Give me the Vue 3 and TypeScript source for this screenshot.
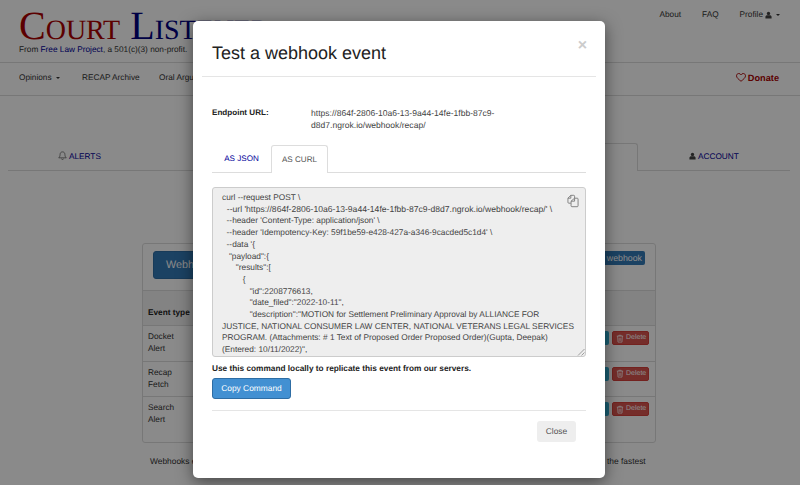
<script setup lang="ts">
const rows: string[][] = [
  ['Docket', 'Alert'],
  ['Recap', 'Fetch'],
  ['Search', 'Alert'],
]
const curlHead = `curl --request POST \\
`
const curlUrl = `  --url 'https://864f-2806-10a6-13-9a44-14fe-1fbb-87c9-d8d7.ngrok.io/webhook/recap/' \\
`
const curlRest = `  --header 'Content-Type: application/json' \\
  --header 'Idempotency-Key: 59f1be59-e428-427a-a346-9cacded5c1d4' \\
  --data '{
   "payload":{
      "results":[
         {
            "id":2208776613,
            "date_filed":"2022-10-11",
            "description":"MOTION for Settlement Preliminary Approval by ALLIANCE FOR
JUSTICE, NATIONAL CONSUMER LAW CENTER, NATIONAL VETERANS LEGAL SERVICES
PROGRAM. (Attachments: # 1 Text of Proposed Order Proposed Order)(Gupta, Deepak)
(Entered: 10/11/2022)",`
</script>

<template>
  <div class="root">
    <div class="page">
      <header class="top">
        <div class="brand">
          <div class="logo"><span class="red">Court</span> <span class="navy">Listener</span></div>
          <div class="tag">From <a class="link">Free Law Project</a>, a 501(c)(3) non-profit.</div>
        </div>
        <nav class="topnav">
          <span>About</span>
          <span>FAQ</span>
          <span class="profile">Profile
            <svg class="usr" viewBox="0 0 10 10"><circle cx="5" cy="2.8" r="2.4" /><path d="M.6 10V7.6C.6 6 2 5.2 3 5.2h4c1 0 2.4.8 2.4 2.4V10z" /></svg>
            <i class="caret"></i>
          </span>
        </nav>
      </header>
      <nav class="mainnav">
        <div class="navleft">
          <span class="opinions">Opinions <i class="caret"></i></span>
          <span class="recap">RECAP Archive</span>
          <span>Oral Arguments</span>
        </div>
        <span class="donate">
          <svg class="heart" viewBox="0 0 20 18"><path d="M10 16.5C5 12.500 1 9.500 1 5.600 1 3 3 1 5.500 1 7.500 1 9 2 10 3.800 11 2 12.500 1 14.500 1 17 1 19 3 19 5.600 19 9.500 15 12.500 10 16.500z" /></svg>
          Donate
        </span>
      </nav>
      <div class="pagetabs">
        <div class="ptab first"><svg class="bell" viewBox="0 0 10 10"><path d="M5 1C3.200 1 2.300 2.300 2.300 4c0 2-.9 3-1.500 3.600h8.400C8.600 7 7.700 6 7.700 4 7.700 2.300 6.800 1 5 1zM4 8.500a1 1 0 0 0 2 0" /></svg> <a class="link">ALERTS</a></div>
        <div class="ptab spacer"></div>
        <div class="ptab active"></div>
        <div class="ptab account"><svg class="usr" viewBox="0 0 10 10"><circle cx="5" cy="2.800" r="2.400" /><path d="M.6 10V7.600C.6 6 2 5.200 3 5.200h4c1 0 2.400.8 2.400 2.400V10z" /></svg> <a class="link">ACCOUNT</a></div>
      </div>
      <section class="panel">
        <div class="panelhead">
          <span class="bigbtn">Webhook Logs</span>
          <span class="addbtn">Add webhook</span>
        </div>
        <div class="thead">Event type</div>
        <div v-for="(r, i) in rows" :key="i" class="trow" :class="{ last: i === 2 }">
          <div class="cell">{{ r[0] }}<br />{{ r[1] }}</div>
          <div class="actions">
            <span class="btn-info">Test</span>
            <span class="btn-del">
              <svg class="trash" viewBox="0 0 10 10"><path d="M1 2h8M3.500 2V1h3v1M2 2l.5 7.500h5L8 2M4 4v4M6 4v4" /></svg>
              Delete
            </span>
          </div>
        </div>
      </section>
      <p class="foot">Webhooks enable you to receive events from CourtListener as soon as they happen, and are the recommended way to get the fastest</p>
    </div>

    <div class="overlay"></div>

    <div class="modal">
      <div class="mhead">
        <h4>Test a webhook event</h4>
        <span class="close">×</span>
      </div>
      <div class="mbody">
        <div class="endpoint">
          <strong>Endpoint URL:</strong>
          <span class="url">https://864f-2806-10a6-13-9a44-14fe-1fbb-87c9-d8d7.ngrok.io/webhook/recap/</span>
        </div>
        <div class="tabs">
          <span class="tab"><a class="link">AS JSON</a></span>
          <span class="tab on">AS CURL</span>
        </div>
        <div class="code">
          <div class="codetext">{{ curlHead }}<span class="urlline">{{ curlUrl }}</span>{{ curlRest }}</div>
          <svg class="copy" viewBox="0 0 16 16"><path d="M5.500 10.500H3.200a1 1 0 0 1-1-1V4.800L5.500 1.500h3.300a1 1 0 0 1 1 1v2" /><path d="M5.500 1.500v3.300H2.200" /><path d="M9.800 4.800h3a1 1 0 0 1 1 1v7.700a1 1 0 0 1-1 1H6.800a1 1 0 0 1-1-1V8.200z" /><path d="M9.800 4.800v3.400H5.800" /></svg>
          <svg class="grip" viewBox="0 0 8 8"><path d="M1 7.500 7.500 1M4.500 7.500l3-3" /></svg>
        </div>
        <p class="hint">Use this command locally to replicate this event from our servers.</p>
        <span class="copybtn">Copy Command</span>
      </div>
      <div class="mfoot">
        <span class="closebtn">Close</span>
      </div>
    </div>
  </div>
</template>

<style>
html, body { margin: 0; overflow: hidden; background: #fff; }
</style>

<style scoped>
.root {
  position: relative;
  width: 800px;
  height: 485px;
  overflow: hidden;
  font-family: "Liberation Sans", Arial, sans-serif;
  font-size: 8.25px;
  color: #333;
  text-rendering: geometricPrecision;
}
.page { height: 485px; overflow: hidden; background: #fff; }
.link { color: #000099; }
.top {
  display: flex;
  justify-content: space-between;
  height: 63px;
  box-sizing: border-box;
  padding: 0 20px 0 19px;
  border-bottom: 1px solid #ddd;
}
.logo {
  font-family: "Liberation Serif", serif;
  font-variant: small-caps;
  font-size: 40px;
  line-height: 35px;
  margin-top: 8px;
  white-space: nowrap;
}
.red { color: #a00; }
.navy { color: #000080; }
.tag { line-height: 14px; }
.topnav { display: flex; gap: 21px; padding-top: 9px; line-height: 12px; }
.profile { display: inline-flex; align-items: center; gap: 2px; height: 12px; }
.usr { width: 7px; height: 8px; fill: #444; }
.caret {
  display: inline-block;
  width: 0;
  height: 0;
  margin-left: 2px;
  vertical-align: middle;
  border-top: 2.500px solid #333;
  border-left: 2.500px solid transparent;
  border-right: 2.500px solid transparent;
}
.mainnav {
  display: flex;
  justify-content: space-between;
  align-items: center;
  height: 29px;
  padding: 0 21px 3px 19px;
  border-bottom: 1px solid #ddd;
}
.navleft { display: flex; white-space: nowrap; }
.opinions { width: 63px; }
.recap { width: 77px; }
.donate { display: flex; align-items: center; gap: 2px; color: #a00; font-weight: 700; font-size: 9.2px; }
.heart { width: 10px; height: 9px; fill: none; stroke: #a00; stroke-width: 1.800; }
.pagetabs {
  display: flex;
  height: 27px;
  margin: 47px 10px 0 8px;
  border-bottom: 1px solid #ddd;
}
.ptab {
  box-sizing: border-box;
  height: 27px;
  line-height: 28px;
  text-align: center;
  white-space: nowrap;
}
.first { width: 143px; }
.spacer { width: 240px; }
.active { width: 247px; border: 1px solid #ddd; border-bottom: 0; background: #fff; height: 28px; border-radius: 3px 3px 0 0; }
.account { flex: 1; }
.bell { width: 9px; height: 9px; fill: none; stroke: #555; stroke-width: .8; vertical-align: -1px; }
.ptab .usr { vertical-align: -1px; }
.panel {
  width: 514px;
  height: 200px;
  box-sizing: border-box;
  margin: 72px 0 0 142px;
  border: 1px solid #ddd;
  border-radius: 3px;
}
.panelhead {
  display: flex;
  justify-content: space-between;
  align-items: flex-start;
  height: 47px;
  box-sizing: border-box;
  padding: 7px 10px 0;
  border-bottom: 1px solid #ddd;
}
.bigbtn {
  background: #337ab7;
  border: 1px solid #2e6da4;
  border-radius: 3px;
  color: #fff;
  font-size: 10.8px;
  line-height: 26px;
  padding: 0 12px;
}
.addbtn {
  background: #337ab7;
  border-radius: 2px;
  color: #fff;
  font-size: 8.8px;
  line-height: 14px;
  padding: 0 3px;
}
.thead {
  background: #f2f2f2;
  height: 35px;
  box-sizing: border-box;
  padding: 0 5px;
  line-height: 44px;
  font-weight: 700;
  color: #222;
  border-bottom: 1px solid #ddd;
}
.trow {
  display: flex;
  justify-content: space-between;
  height: 35.500px;
  box-sizing: border-box;
  padding: 5px 6px 0 5px;
  line-height: 12px;
  border-bottom: 1px solid #ddd;
}
.trow.last { border-bottom: 0; height: 46px; }
.actions { display: flex; gap: 3px; }
.btn-info, .btn-del {
  display: inline-flex;
  align-items: center;
  box-sizing: border-box;
  height: 14px;
  border-radius: 2px;
  color: #fff;
  font-size: 7px;
  padding: 0 3px;
  gap: 2px;
}
.btn-info { background: #31b0d5; width: 30px; }
.btn-del { background: #d9534f; border: 1px solid #d43f3a; width: 37px; white-space: nowrap; }
.trash { width: 8px; height: 9px; fill: none; stroke: #fff; stroke-width: .9; flex: none; }
.foot { margin: 11px 0 0 150px; line-height: 14px; white-space: nowrap; font-size: 8.4px; }
.overlay { position: absolute; inset: 0; background: rgba(0, 0, 0, .46); }
.modal {
  position: absolute;
  left: 193px;
  top: 21px;
  width: 412px;
  height: 457px;
  box-sizing: border-box;
  background: #fff;
  border-radius: 5px;
  box-shadow: 0 4px 16px rgba(0, 0, 0, .5);
}
.mhead {
  position: relative;
  height: 55px;
  margin: 0 9px;
  border-bottom: 1px solid #e5e5e5;
}
.mhead h4 {
  margin: 0;
  padding: 20px 0 0 10px;
  font-size: 18px;
  line-height: 24px;
  font-weight: 400;
  color: #222;
}
.close {
  position: absolute;
  right: 9px;
  top: 15px;
  font-size: 16px;
  line-height: 20px;
  font-weight: 700;
  color: #ccc;
}
.mbody { padding: 30px 19px 0; }
.endpoint {
  display: flex;
  min-height: 30px;
  line-height: 12px;
  color: #444;
}
.endpoint strong { width: 99px; flex: none; color: #222; font-size: 8.1px; }
.url { width: 200px; font-size: 8.55px; }
.tabs {
  display: flex;
  height: 27px;
  margin-top: 8px;
  border-bottom: 1px solid #ddd;
  line-height: 28px;
}
.tab { width: 59px; box-sizing: border-box; text-align: center; height: 27px; font-size: 8.1px; }
.tab.on { width: 57px; border: 1px solid #ddd; border-bottom: 0; background: #fff; height: 28px; border-radius: 3px 3px 0 0; color: #555; }
.code {
  position: relative;
  height: 170px;
  box-sizing: border-box;
  margin-top: 14px;
  padding: 4px 9px;
  background: #eee;
  border: 1px solid #ccc;
  border-radius: 3px;
  overflow: hidden;
}
.codetext {
  white-space: pre;
  font-size: 8.3px;
  line-height: 11.700px;
  color: #444;
}
.urlline { font-size: 8.6px; }
.copy {
  position: absolute;
  right: 5px;
  top: 6px;
  width: 14px;
  height: 14px;
  fill: none;
  stroke: #777;
  stroke-width: 1;
}
.grip {
  position: absolute;
  right: 0;
  bottom: 0;
  width: 8px;
  height: 8px;
  fill: none;
  stroke: #888;
  stroke-width: .8;
}
.hint { margin: 6px 0 3px; line-height: 12px; font-weight: 700; color: #222; font-size: 8.27px; }
.copybtn {
  display: block;
  box-sizing: border-box;
  width: 79px;
  height: 21px;
  background: #4290d2;
  border: 1px solid #2e6da4;
  border-radius: 3px;
  color: #fff;
  font-size: 8.4px;
  line-height: 19px;
  text-align: center;
}
.mfoot {
  display: flex;
  justify-content: flex-end;
  margin: 11px 19px 0;
  padding: 10px 10px 0 0;
  border-top: 1px solid #e5e5e5;
}
.closebtn {
  width: 39px;
  height: 21px;
  background: #eee;
  border-radius: 3px;
  color: #555;
  text-align: center;
  font-size: 8.4px;
  line-height: 21px;
}
</style>
